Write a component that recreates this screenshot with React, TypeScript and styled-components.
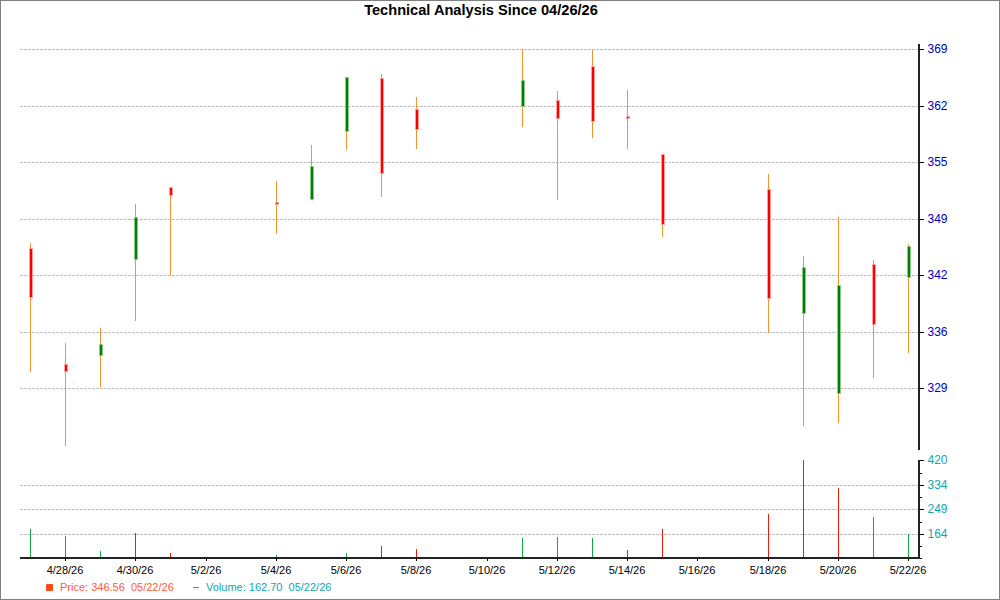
import React from 'react'
import styled, { createGlobalStyle } from 'styled-components'

const GlobalStyle = createGlobalStyle`
    html, body {
        margin: 0;
        padding: 0;
        background: #fff;
    }
`

const Frame = styled.div`
    box-sizing: border-box;
    width: 1000px;
    height: 600px;
    overflow: hidden;
    display: flex;
    flex-direction: column;
    background: #fff;
    border: 1px solid #808080;
    font-family: "Liberation Sans", Arial, sans-serif;
`

const Title = styled.h1`
    box-sizing: border-box;
    margin: 0;
    height: 19px;
    padding: 1px 38px 0 0;
    line-height: 16px;
    font-size: 14.6px;
    font-weight: 700;
    text-align: center;
    color: #000;
`

const ChartSvg = styled.svg`
    display: block;
    width: 998px;
    height: 560px;
    flex: none;
`

const Legend = styled.div`
    display: flex;
    align-items: flex-start;
    height: 18px;
    padding-left: 45px;
    font-size: 11px;
    line-height: 14px;
`

const LegendItem = styled.div<{ $color: string; $width: number }>`
    display: flex;
    align-items: center;
    width: ${p => p.$width}px;
    color: ${p => p.$color};
    white-space: pre;
`

const Swatch = styled.span`
    width: 7px;
    height: 7px;
    margin-right: 7px;
    background: #ff4a14;
    border-radius: 1px;
`

const Dash = styled.span`
    width: 6px;
    height: 1px;
    margin-right: 7px;
    background: #10a8b0;
`

type Candle = { x: number; high: number; low: number; top: number; bottom: number; up: boolean }

const candles: Candle[] = [
    { x: 30, high: 243, low: 372, top: 248, bottom: 298, up: false },
    { x: 65, high: 343, low: 446, top: 364, bottom: 372, up: false },
    { x: 100, high: 328, low: 387, top: 344, bottom: 356, up: true },
    { x: 135, high: 204, low: 321, top: 217, bottom: 260, up: true },
    { x: 170, high: 187, low: 275, top: 187, bottom: 196, up: false },
    { x: 276, high: 181, low: 234, top: 202, bottom: 205, up: false },
    { x: 311, high: 145, low: 200, top: 166, bottom: 200, up: true },
    { x: 346, high: 77, low: 150, top: 77, bottom: 132, up: true },
    { x: 381, high: 74, low: 197, top: 78, bottom: 174, up: false },
    { x: 416, high: 97, low: 149, top: 109, bottom: 130, up: false },
    { x: 522, high: 49, low: 127, top: 80, bottom: 107, up: true },
    { x: 557, high: 91, low: 200, top: 100, bottom: 119, up: false },
    { x: 592, high: 50, low: 138, top: 66, bottom: 122, up: false },
    { x: 627, high: 90, low: 149, top: 116, bottom: 119, up: false },
    { x: 662, high: 154, low: 237, top: 154, bottom: 225, up: false },
    { x: 768, high: 174, low: 333, top: 189, bottom: 299, up: false },
    { x: 803, high: 256, low: 426, top: 267, bottom: 314, up: true },
    { x: 838, high: 217, low: 423, top: 285, bottom: 394, up: true },
    { x: 873, high: 260, low: 378, top: 264, bottom: 325, up: false },
    { x: 908, high: 244, low: 353, top: 246, bottom: 278, up: true },
]

const volumes: { x: number; y: number; up: boolean }[] = [
    { x: 30, y: 529, up: true },
    { x: 65, y: 536, up: true },
    { x: 100, y: 551, up: true },
    { x: 135, y: 533, up: false },
    { x: 170, y: 553, up: false },
    { x: 276, y: 555, up: true },
    { x: 346, y: 553, up: true },
    { x: 381, y: 546, up: false },
    { x: 416, y: 549, up: false },
    { x: 522, y: 538, up: true },
    { x: 557, y: 537, up: true },
    { x: 592, y: 538, up: true },
    { x: 627, y: 550, up: false },
    { x: 662, y: 529, up: false },
    { x: 768, y: 514, up: false },
    { x: 803, y: 460, up: false },
    { x: 838, y: 488, up: false },
    { x: 873, y: 517, up: true },
    { x: 908, y: 534, up: true },
]

const priceTicks = [
    { y: 49, label: '369' },
    { y: 106, label: '362' },
    { y: 162, label: '355' },
    { y: 219, label: '349' },
    { y: 275, label: '342' },
    { y: 332, label: '336' },
    { y: 388, label: '329' },
]

const volumeTicks = [
    { y: 460, label: '420' },
    { y: 485, label: '334' },
    { y: 509, label: '249' },
    { y: 534, label: '164' },
]

const minorTicks = [473, 497, 522, 546, 558]

const dateTicks = [
    { x: 65, label: '4/28/26' },
    { x: 135, label: '4/30/26' },
    { x: 206, label: '5/2/26' },
    { x: 276, label: '5/4/26' },
    { x: 346, label: '5/6/26' },
    { x: 416, label: '5/8/26' },
    { x: 487, label: '5/10/26' },
    { x: 557, label: '5/12/26' },
    { x: 627, label: '5/14/26' },
    { x: 697, label: '5/16/26' },
    { x: 768, label: '5/18/26' },
    { x: 838, label: '5/20/26' },
    { x: 908, label: '5/22/26' },
]

const GRID = '#c0c0c0'
const RED = '#ff0000'
const GREEN = '#008000'

const ChartLines = () => (
    <g shapeRendering="crispEdges">
        {/* the top volume tick has no grid line */}
        {[...priceTicks, ...volumeTicks.slice(1)].map(t => (
            <line key={t.y} x1={20} x2={918} y1={t.y + 0.5} y2={t.y + 0.5} stroke={GRID} strokeDasharray="3 1" />
        ))}
    </g>
)

const Candles = () => (
    <g shapeRendering="crispEdges">
        {candles.map(c => (
            <g key={c.x}>
                <line x1={c.x + 0.5} x2={c.x + 0.5} y1={c.high} y2={c.low} stroke="#f0962e" />
                <rect
                    x={c.x - 1}
                    y={c.top}
                    width={4}
                    height={c.bottom - c.top}
                    fill={c.up ? '#90c890' : '#ffa0a0'}
                />
                <rect
                    x={c.x}
                    y={c.top + 1}
                    width={2}
                    height={c.bottom - c.top - 2}
                    fill={c.up ? GREEN : RED}
                />
            </g>
        ))}
    </g>
)

const Volumes = () => (
    <g shapeRendering="crispEdges">
        {volumes.map(v => (
            <line
                key={v.x}
                x1={v.x + 0.5}
                x2={v.x + 0.5}
                y1={v.y}
                y2={558}
                stroke={v.up ? '#10a840' : '#f01a08'}
            />
        ))}
    </g>
)

const Axes = () => (
    <g shapeRendering="crispEdges" stroke="#000">
        <line x1={919} x2={919} y1={44} y2={450} strokeWidth={2} stroke="#222" />
        <line x1={919} x2={919} y1={460} y2={559} strokeWidth={2} stroke="#222" />
        <line x1={20} x2={920} y1={558} y2={558} strokeWidth={2} stroke="#222" />
        {[...priceTicks, ...volumeTicks].map(t => (
            <line key={t.y} x1={920} x2={924} y1={t.y + 0.5} y2={t.y + 0.5} />
        ))}
        {minorTicks.map(y => (
            <line key={y} x1={920} x2={922} y1={y + 0.5} y2={y + 0.5} />
        ))}
        {dateTicks.map(t => (
            <line key={t.x} x1={t.x + 0.5} x2={t.x + 0.5} y1={558} y2={561} />
        ))}
    </g>
)

const AxisLabels = () => (
    <g fontFamily='"Liberation Sans", Arial, sans-serif'>
        {priceTicks.map(t => (
            <text key={t.y} x={927.5} y={t.y + 4} fontSize={12} fill="#0000c0">
                {t.label}
            </text>
        ))}
        {volumeTicks.map(t => (
            <text key={t.y} x={927.5} y={t.y + 4} fontSize={12} fill="#10a8b0">
                {t.label}
            </text>
        ))}
        {dateTicks.map(t => (
            <text key={t.x} x={t.x} y={574} fontSize={11} fill="#000" textAnchor="middle">
                {t.label}
            </text>
        ))}
    </g>
)

export default function App() {
    return (
        <Frame>
            <GlobalStyle />
            <Title>Technical Analysis Since 04/26/26</Title>
            <ChartSvg viewBox="1 20 998 560">
                <ChartLines />
                <Volumes />
                <Candles />
                <Axes />
                <AxisLabels />
            </ChartSvg>
            <Legend>
                <LegendItem $color="#ff5a3c" $width={147}>
                    <Swatch />
                    Price: 346.56  05/22/26
                </LegendItem>
                <LegendItem $color="#10a8b0" $width={160}>
                    <Dash />
                    Volume: 162.70  05/22/26
                </LegendItem>
            </Legend>
        </Frame>
    )
}
